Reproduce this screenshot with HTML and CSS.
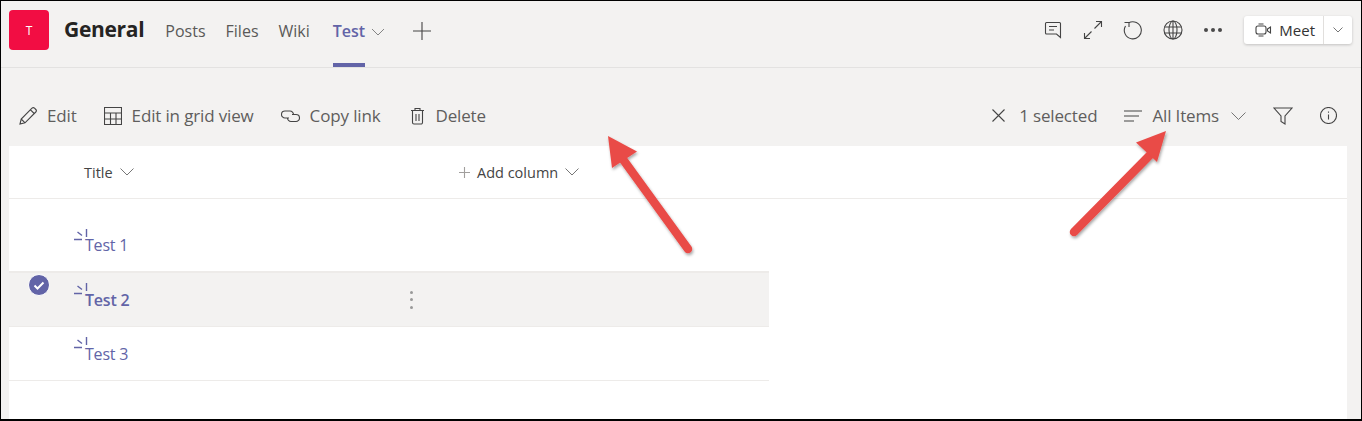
FILE: index.html
```html
<!DOCTYPE html>
<html lang="en">
<head>
  <meta charset="UTF-8">
  <title>General - Test</title>
  <link rel="stylesheet" href="styles.css">
</head>
<body>
  <div class="frame">
    <!-- Channel header -->
    <header class="channel-bar">
      <div class="team-tile">T</div>
      <h1 class="channel-name">General</h1>
      <nav class="tabs">
        <a class="tab">Posts</a>
        <a class="tab">Files</a>
        <a class="tab">Wiki</a>
        <a class="tab active"><span class="tab-label">Test</span>
          <svg class="tab-chevron" width="14" height="8" viewBox="0 0 14 8"><path d="M1 1l6 6 6-6"/></svg>
        </a>
      </nav>
      <svg class="icon add-tab" width="20" height="20" viewBox="0 0 20 20"><path d="M10 1v18M1 10h18"/></svg>
      <div class="header-actions">
        <svg class="icon" width="20" height="20" viewBox="0 0 20 20"><path d="M3.500 2.500h13a1 1 0 0 1 1 1v14l-4-3.500h-10a1 1 0 0 1-1-1v-9.500a1 1 0 0 1 1-1zM6 6.500h8M6 10h5"/></svg>
        <svg class="icon" width="20" height="20" viewBox="0 0 20 20"><path d="M11.500 8.500L18.500 1.500M13 1.500h5.500V7M8.500 11.500L1.500 18.500M1.500 13v5.500H7"/></svg>
        <svg class="icon" width="20" height="20" viewBox="0 0 20 20"><path d="M5.500 3A8.500 8.500 0 1 1 2.500 6M1.500 2.500h4.500V7"/></svg>
        <svg class="icon" width="20" height="20" viewBox="0 0 20 20"><circle cx="10" cy="10" r="9"/><ellipse cx="10" cy="10" rx="4" ry="9"/><path d="M1.500 7h17M1.500 13h17M10 1v18"/></svg>
        <div class="more-dots"><i></i><i></i><i></i></div>
        <div class="meet-btn">
          <span class="meet-main">
            <svg class="icon" width="17" height="14" viewBox="0 0 17 14"><rect x="1" y="3" width="10" height="8" rx="2"/><path d="M12.500 6l3-2v6l-3-2zM3.500 1h5M3.500 13h5"/></svg>
            Meet
          </span>
          <span class="meet-drop">
            <svg class="chevron" width="10" height="6" viewBox="0 0 10 6"><path d="M.5.500L5 5 9.500.500"/></svg>
          </span>
        </div>
      </div>
    </header>

    <!-- Command bar -->
    <div class="command-bar">
      <div class="cmd-group">
        <span class="cmd">
          <svg class="icon" width="18" height="18" viewBox="0 0 18 18"><path d="M1 17l1.200-5L13 1.200a1.800 1.800 0 0 1 2.500 0l1.300 1.300a1.800 1.800 0 0 1 0 2.500L6 15.800zM2.200 12L6 15.800M11.500 2.800l3.700 3.700"/></svg>
          Edit
        </span>
        <span class="cmd">
          <svg class="icon" width="18" height="18" viewBox="0 0 18 18"><path d="M.5.500h17v17H.5zM.5 6h17M.5 12h17M6.500 6v11.500M12 6v11.500"/></svg>
          Edit in grid view
        </span>
        <span class="cmd">
          <svg class="icon" width="19" height="14" viewBox="0 0 19 14"><path d="M8 9H4a3.500 3.500 0 0 1 0-7h5a3.500 3.500 0 0 1 3.500 3.500"/><path d="M11 5.500h4a3.500 3.500 0 0 1 0 7h-5a3.500 3.500 0 0 1-3.500-3.500"/></svg>
          Copy link
        </span>
        <span class="cmd trash">
          <svg class="icon" width="15" height="18" viewBox="0 0 15 18"><path d="M1 3.500h13M5 3.500V1.500h5v2M2.500 3.500v12a1.500 1.500 0 0 0 1.500 1.500h7a1.500 1.500 0 0 0 1.500-1.500v-12M6 7v7M9 7v7"/></svg>
          Delete
        </span>
      </div>
      <div class="cmd-group right">
        <span class="cmd selected-count">
          <svg class="icon" width="13" height="13" viewBox="0 0 13 13"><path d="M.5.500l12 12M12.500.500l-12 12"/></svg>
          1 selected
        </span>
        <span class="cmd view-picker">
          <svg class="icon" width="18" height="12" viewBox="0 0 18 12"><path d="M0 1h18M0 6h15M0 11h10"/></svg>
          All Items
          <svg class="chevron view-chevron" width="15" height="8" viewBox="0 0 15 8"><path d="M.5.500l7 7 7-7"/></svg>
        </span>
        <svg class="icon" width="20" height="18" viewBox="0 0 20 18"><path d="M1 1h18l-7 8v8l-4-2.500V9z"/></svg>
        <svg class="icon" width="17" height="17" viewBox="0 0 17 17"><circle cx="8.500" cy="8.500" r="8"/><path d="M8.500 7.500v5M8.500 4.500v1.200"/></svg>
      </div>
    </div>

    <!-- List -->
    <main class="list-card">
      <div class="list-head">
        <span class="col-title">Title
          <svg class="chevron" width="14" height="8" viewBox="0 0 14 8"><path d="M.5.500L7 7 13.500.500"/></svg>
        </span>
        <span class="col-add">
          <svg class="add-plus" width="11" height="11" viewBox="0 0 11 11"><path d="M5.500 0v11M0 5.500h11"/></svg>
          Add column
          <svg class="chevron" width="14" height="8" viewBox="0 0 14 8"><path d="M.5.500L7 7 13.500.500"/></svg>
        </span>
      </div>
      <div class="rows">
        <div class="row first">
          <svg class="new-mark" width="14" height="12" viewBox="0 0 14 12"><path d="M12.500 0v8M3.500 3l4.500 3.500M0 10.500h8"/></svg>
          <span class="row-title">Test 1</span>
        </div>
        <div class="row selected">
          <svg class="check" width="22" height="22" viewBox="0 0 22 22"><circle cx="11" cy="11" r="10.500"/><path d="M6.500 11.500l3 3 6-6"/></svg>
          <svg class="new-mark" width="14" height="12" viewBox="0 0 14 12"><path d="M12.500 0v8M3.500 3l4.500 3.500M0 10.500h8"/></svg>
          <span class="row-title">Test 2</span>
          <div class="row-menu"><i></i><i></i><i></i></div>
        </div>
        <div class="row">
          <svg class="new-mark" width="14" height="12" viewBox="0 0 14 12"><path d="M12.500 0v8M3.500 3l4.500 3.500M0 10.500h8"/></svg>
          <span class="row-title">Test 3</span>
        </div>
      </div>
    </main>

    <!-- Callout arrows on top of the screenshot -->
    <svg class="arrows" width="1362" height="421" viewBox="0 0 1362 421">
      <defs>
        <filter id="arrow-shadow" x="-20%" y="-20%" width="150%" height="150%">
          <feDropShadow dx="1" dy="2" stdDeviation="1.500" flood-color="#000" flood-opacity=".35"/>
        </filter>
      </defs>
      <g filter="url(#arrow-shadow)">
        <path class="shaft" d="M688 249L622 158"/>
        <path class="head" d="M608 136L637 151.500L612 168z"/>
        <path class="shaft" d="M1074 232L1150 155"/>
        <path class="head" d="M1166 131L1136 142.500L1157 162z"/>
      </g>
    </svg>
  </div>
</body>
</html>
```

FILE: styles.css
```css
* {
  box-sizing: border-box;
}
html, body {
  margin: 0;
  height: 100%;
}
body {
  background: #000;
  font-family: "Open Sans", "Noto Sans", sans-serif;
  color: #424242;
  overflow: hidden;
}
.frame {
  position: relative;
  width: 1362px;
  height: 421px;
  border: 1px solid #000;
  border-bottom-width: 2px;
  background: #f3f2f1;
  display: flex;
  flex-direction: column;
  overflow: hidden;
}
.icon, .add-plus, .new-mark {
  fill: none;
  stroke: #444;
  stroke-width: 1.1;
  flex: none;
}
.chevron, .tab-chevron {
  fill: none;
  stroke: #666;
  stroke-width: .9;
  flex: none;
}

/* channel header */
.channel-bar {
  height: 67px;
  flex: none;
  display: flex;
  align-items: flex-start;
  padding: 9px 0 0 8px;
  border-bottom: 1px solid #e3e2e1;
}
.team-tile {
  width: 40px;
  height: 40px;
  border-radius: 4px;
  background: #f20d43;
  color: #fff;
  font-size: 12px;
  display: flex;
  align-items: center;
  justify-content: center;
}
.channel-name {
  margin: 5px 0 0 15px;
  font-size: 21px;
  line-height: 28px;
  font-weight: 700;
  color: #252423;
  letter-spacing: -.3px;
}
.tabs {
  display: flex;
  margin-left: 21px;
  height: 57px;
  gap: 20px;
}
.tab {
  font-size: 16px;
  line-height: 24px;
  padding-top: 9px;
  color: #5a5958;
  white-space: nowrap;
}
.tab.active {
  color: #6264a7;
  font-weight: 600;
  display: flex;
  align-items: flex-start;
  gap: 6px;
  margin-left: 3px;
}
.tab-label {
  display: block;
  height: 48px;
  border-bottom: 4px solid #6264a7;
}
.tab-chevron {
  margin-top: 9px;
  stroke: #777;
}
.add-tab {
  margin: 11px 0 0 27px;
}
.header-actions {
  margin-left: auto;
  display: flex;
  align-items: center;
  gap: 20px;
  height: 28px;
  margin-top: 6px;
  padding-right: 9px;
}
.more-dots {
  display: flex;
  gap: 3px;
  margin-left: 1px;
}
.more-dots i {
  width: 4px;
  height: 4px;
  border-radius: 50%;
  background: #4a4a4a;
}
.meet-btn {
  display: flex;
  height: 28px;
  margin-left: 2px;
  background: #fff;
  border-radius: 3px;
  box-shadow: 0 1px 3px rgba(0,0,0,.2);
  font-size: 15px;
  font-weight: 500;
  color: #333;
}
.meet-main {
  display: flex;
  align-items: center;
  gap: 7px;
  padding: 0 8px 0 11px;
  border-right: 1px solid #e1dfdd;
}
.meet-drop {
  display: flex;
  align-items: center;
  padding: 0 9px;
}

/* command bar */
.command-bar {
  height: 78px;
  flex: none;
  display: flex;
  justify-content: space-between;
  align-items: center;
  padding: 17px 24px 0 18px;
  font-size: 17px;
  letter-spacing: -.15px;
  color: #5f5e5d;
}
.cmd-group {
  display: flex;
  align-items: center;
  gap: 27px;
}
.cmd {
  display: flex;
  align-items: center;
  gap: 10px;
  white-space: nowrap;
}
.trash {
  margin-left: 3px;
}
.selected-count {
  gap: 14px;
}
.view-chevron {
  margin-left: 2px;
}

/* list */
.list-card {
  flex: 1;
  margin: 0 14px 0 8px;
  background: #fff;
}
.list-head {
  height: 53px;
  display: flex;
  align-items: center;
  font-size: 14.500px;
  color: #444;
  border-bottom: 1px solid #edebe9;
}
.col-title {
  display: flex;
  align-items: center;
  gap: 7px;
  width: 375px;
  margin-left: 75px;
}
.col-add {
  display: flex;
  align-items: center;
  gap: 7px;
}
.add-plus {
  stroke: #a19f9d;
}
.rows {
  width: 760px;
  padding-top: 20px;
}
.row {
  position: relative;
  height: 54px;
  display: flex;
  align-items: center;
  padding-left: 76px;
  border-bottom: 1px solid #edebe9;
  color: #6264a7;
  font-size: 16px;
  letter-spacing: -.2px;
}
.row.first {
  border-bottom-width: 2px;
}
.row.selected {
  background: #f3f2f1;
  font-weight: 600;
}
.row-title {
  margin-left: -3px;
}
.new-mark {
  stroke: #6264a7;
  stroke-width: 1.400;
  align-self: flex-start;
  margin-top: 10px;
  margin-left: -11px;
}
.check {
  position: absolute;
  left: 19px;
  top: 1px;
}
.check circle {
  fill: #6264a7;
  stroke: #fff;
  stroke-width: 1;
}
.check path {
  fill: none;
  stroke: #fff;
  stroke-width: 2;
}
.row-menu {
  margin-left: auto;
  margin-right: 356px;
  display: flex;
  flex-direction: column;
  gap: 4.500px;
}
.row-menu i {
  width: 3px;
  height: 3px;
  border-radius: 50%;
  background: #999;
}

/* callouts */
.arrows {
  position: absolute;
  left: -1px;
  top: -1px;
  pointer-events: none;
}
.shaft {
  fill: none;
  stroke: #e94b47;
  stroke-width: 8.500;
  stroke-linecap: round;
}
.head {
  fill: #e94b47;
}
```
